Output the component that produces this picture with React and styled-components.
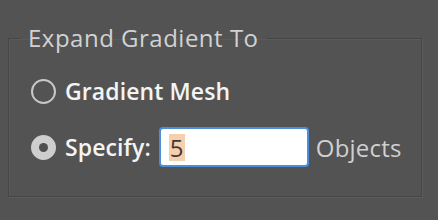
import React from "react";
import styled, { createGlobalStyle } from "styled-components";

const Global = createGlobalStyle`
  html, body { margin: 0; padding: 0; background: #535353; }
  body { width: 438px; height: 220px; overflow: hidden; font-family: "Open Sans", "Noto Sans", sans-serif; }
`;

const Page = styled.div`
  padding: 25px 16px 0 8px;
  box-sizing: border-box;
  width: 438px;
  height: 220px;
`;

const Group = styled.fieldset`
  margin: 0;
  width: 414px;
  height: 172px;
  box-sizing: border-box;
  border: 1px solid #464646;
  box-shadow: 1px 1px 0 #5b5b5b, inset 1px 1px 0 #5a5a5a;
  padding: 0;
`;

const Legend = styled.legend`
  margin-left: 11px;
  padding: 0 8px;
  color: #d2d2d2;
  font-size: 24px;
  letter-spacing: 0.5px;
  line-height: 26px;
`;

const Body = styled.div`
  padding: 20px 0 0 22px;
  display: flex;
  flex-direction: column;
  gap: 16px;
`;

const Row = styled.div`
  display: flex;
  align-items: center;
  height: 40px;
`;

const Radio = styled.span`
  width: 25px;
  height: 25px;
  flex: none;
  box-sizing: border-box;
  border-radius: 50%;
  border: 2px solid ${(p) => (p.$checked ? "#cecece" : "#c8c8c8")};
  background: ${(p) => (p.$checked ? "#cecece" : "transparent")};
  display: flex;
  align-items: center;
  justify-content: center;
  margin-right: 9px;
  &::after {
    content: "";
    width: 9px;
    height: 9px;
    border-radius: 50%;
    background: #4f4f4f;
    display: ${(p) => (p.$checked ? "block" : "none")};
  }
`;

const Label = styled.span`
  color: #f4f4f4;
  font-size: 23px;
  font-weight: 600;
  letter-spacing: 0.1px;
`;

const Input = styled.div`
  width: 150px;
  height: 40px;
  box-sizing: border-box;
  margin-left: 8px;
  border: 2px solid #4b8fdc;
  border-radius: 4px;
  background: #ffffff;
  display: flex;
  align-items: center;
  padding-left: 8px;
`;

const Selected = styled.span`
  background: #f6cfad;
  color: #3a3a3a;
  font-size: 24px;
  line-height: 27px;
  padding: 0 1px;
`;

const Unit = styled.span`
  color: #d0d0d0;
  font-size: 24px;
  margin-left: 7px;
  letter-spacing: 0.2px;
`;

export default function App() {
  return (
    <>
      <Global />
      <Page>
        <Group>
          <Legend>Expand Gradient To</Legend>
          <Body>
            <Row>
              <Radio />
              <Label>Gradient Mesh</Label>
            </Row>
            <Row>
              <Radio $checked />
              <Label>Specify:</Label>
              <Input>
                <Selected>5</Selected>
              </Input>
              <Unit>Objects</Unit>
            </Row>
          </Body>
        </Group>
      </Page>
    </>
  );
}
